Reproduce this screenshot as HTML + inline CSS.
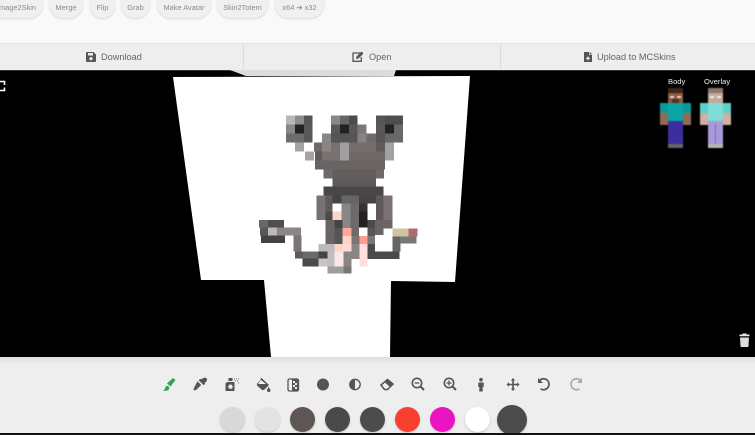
<!DOCTYPE html>
<html><head><meta charset="utf-8">
<style>
html,body{margin:0;padding:0;width:755px;height:435px;overflow:hidden;background:#eee;font-family:"Liberation Sans",sans-serif}
.abs{position:absolute}
#top{left:0;top:0;width:755px;height:43px;background:#f9f9f9}
.chip{position:absolute;top:-10px;height:28px;border-radius:14px;background:#f0f0f0;box-shadow:0 1px 2px rgba(0,0,0,.14);color:#8a8a8a;font-size:7.4px;line-height:36px;text-align:center;white-space:nowrap;overflow:hidden}
#bar{left:0;top:43px;width:755px;height:27px;background:#eeeeee;border-top:1px solid #e2e2e2;box-sizing:border-box}
.bt{position:absolute;top:44px;height:27px;line-height:27px;color:#666;font-size:9.2px;white-space:nowrap}
.sep{position:absolute;top:43px;width:1px;height:26px;background:#dcdcdc}
#view{left:0;top:70px;width:755px;height:287px;background:#000;border-top:1px solid #333;box-sizing:border-box}
#tools{left:0;top:357px;width:755px;height:76px;background:linear-gradient(#dedede,#eee 7px,#eee)}
#line{left:0;top:433px;width:755px;height:2px;background:#111}
.dot{position:absolute;border-radius:50%;width:25px;height:25px;top:407px;box-shadow:0 1px 2px rgba(0,0,0,.18)}
.lb{position:absolute;color:#eee;font-size:7.6px;top:77px;white-space:nowrap}
svg{position:absolute;overflow:visible}
.px{shape-rendering:crispEdges;filter:blur(.45px)}
</style></head><body>
<div class="abs" id="top"></div>
<div class="chip" style="left:-12px;width:55px;text-align:right"><span style="margin-right:7px">mage2Skin</span></div>
<div class="chip" style="left:49px;width:34px">Merge</div>
<div class="chip" style="left:90px;width:25px">Flip</div>
<div class="chip" style="left:121px;width:29px">Grab</div>
<div class="chip" style="left:157px;width:54px">Make Avatar</div>
<div class="chip" style="left:217px;width:51px">Skin2Totem</div>
<div class="chip" style="left:275px;width:49px">x64 ➔ x32</div>

<div class="abs" id="bar"></div>
<div class="sep" style="left:243px"></div><div class="sep" style="left:500px"></div>
<svg style="left:86px;top:52px" width="10" height="10" viewBox="0 0 10 10"><path fill="#555" d="M0 1a1 1 0 0 1 1-1h6.500L10 2.500V9a1 1 0 0 1-1 1H1a1 1 0 0 1-1-1zM2 1v2.500h5V1zM5 5a1.700 1.700 0 1 0 .01 0z" fill-rule="evenodd"/></svg>
<div class="bt" style="left:101px">Download</div>
<svg style="left:352px;top:51px" width="12" height="11" viewBox="0 0 12 11"><path fill="none" stroke="#555" stroke-width="1.300" d="M8.500 2H1v8.300h8.300V6"/><path fill="#555" d="M4 8l.5-2.500L9.500.5l2 2-5 5z"/></svg>
<div class="bt" style="left:369px">Open</div>
<svg style="left:584px;top:52px" width="8" height="10" viewBox="0 0 8 10"><path fill="#555" fill-rule="evenodd" d="M0 0h5v2.700h3V10H0zM5.700 0L8 2.100H5.700zM3.400 4.500v1.300H2.100V7h1.300v1.300h1.200V7h1.300V5.800H4.600V4.500z"/></svg>
<div class="bt" style="left:597px">Upload to MCSkins</div>

<div class="abs" id="view"></div>
<svg style="left:0;top:0" width="755" height="435" viewBox="0 0 755 435">
<polygon points="230,70 396,70 394,76 246,76" fill="#dcdcdc"/>
<polygon points="173,77 470,76 455,282 391,281 390,357 271,357 264,280 201,280" fill="#fff"/>
<path d="M0 81.500h4.500v3.500M0 90.500h4.500v-3" fill="none" stroke="#fff" stroke-width="1.600"/>
<g class="px" transform="translate(250,105) scale(.33333)">
<rect x="108" y="32" width="27" height="27" fill="#b8b6b6"/><rect x="135" y="32" width="27" height="27" fill="#8e8b8b"/><rect x="162" y="32" width="26" height="27" fill="#555"/>
<rect x="108" y="59" width="27" height="27" fill="#8a8888"/><rect x="135" y="59" width="27" height="27" fill="#222"/><rect x="162" y="59" width="26" height="27" fill="#5a5757"/>
<rect x="108" y="86" width="54" height="26" fill="#6f6c6c"/><rect x="162" y="86" width="26" height="26" fill="#5a5757"/>
<rect x="135" y="112" width="27" height="27" fill="#a5a3a3"/><rect x="165" y="139" width="27" height="27" fill="#a5a3a3"/>
<rect x="243" y="32" width="27" height="27" fill="#8a8787"/><rect x="270" y="32" width="27" height="27" fill="#666"/><rect x="297" y="32" width="26" height="27" fill="#4d4b4b"/>
<rect x="243" y="59" width="27" height="27" fill="#5a5757"/><rect x="270" y="59" width="27" height="27" fill="#222"/><rect x="297" y="59" width="26" height="27" fill="#5a5757"/><rect x="323" y="59" width="27" height="27" fill="#7d7878"/>
<rect x="243" y="86" width="80" height="27" fill="#555"/><rect x="323" y="86" width="27" height="27" fill="#8a8282"/><rect x="350" y="86" width="28" height="27" fill="#6f6868"/>
<rect x="378" y="32" width="27" height="27" fill="#555"/><rect x="405" y="32" width="54" height="27" fill="#4f4d4d"/>
<rect x="378" y="59" width="27" height="27" fill="#5a5757"/><rect x="405" y="59" width="27" height="27" fill="#222"/><rect x="432" y="59" width="27" height="27" fill="#6b6868"/>
<rect x="378" y="86" width="27" height="27" fill="#555"/><rect x="405" y="86" width="54" height="27" fill="#6a6767"/>
<rect x="405" y="113" width="27" height="54" fill="#a3a1a1"/>
<rect x="216" y="86" width="27" height="27" fill="#8a8686"/>
<rect x="192" y="113" width="24" height="27" fill="#6f6868"/><rect x="216" y="113" width="27" height="27" fill="#8a8686"/><rect x="243" y="113" width="27" height="27" fill="#7a7070"/><rect x="270" y="113" width="27" height="54" fill="#a09e9e"/><rect x="297" y="113" width="81" height="27" fill="#756d6d"/><rect x="378" y="113" width="27" height="27" fill="#5f5b5b"/>
<rect x="195" y="140" width="21" height="27" fill="#605a5a"/><rect x="216" y="140" width="54" height="27" fill="#7a7070"/><rect x="297" y="140" width="81" height="27" fill="#6f6868"/><rect x="378" y="140" width="27" height="27" fill="#706868"/>
<rect x="195" y="167" width="210" height="27" fill="#6a6363"/>
<rect x="221" y="194" width="27" height="27" fill="#6f6868"/><rect x="248" y="194" width="130" height="27" fill="#625c5c"/><rect x="378" y="194" width="24" height="27" fill="#6f6868"/>
<rect x="248" y="221" width="130" height="24" fill="#5f5a5a"/>
<rect x="221" y="245" width="180" height="27" fill="#474747"/>
<rect x="248" y="272" width="130" height="24" fill="#444"/>
<rect x="200" y="272" width="27" height="73" fill="#7a7272"/><rect x="227" y="272" width="21" height="48" fill="#5f5959"/><rect x="227" y="320" width="21" height="25" fill="#4a4a4a"/>
<rect x="378" y="272" width="22" height="73" fill="#5f5959"/><rect x="400" y="272" width="27" height="73" fill="#7a7272"/>
<rect x="275" y="272" width="27" height="24" fill="#666"/><rect x="302" y="272" width="25" height="24" fill="#6a6363"/>
<rect x="248" y="296" width="27" height="24" fill="#fff"/><rect x="275" y="296" width="27" height="97" fill="#8a8686"/><rect x="302" y="296" width="25" height="97" fill="#6f6a6a"/><rect x="327" y="296" width="25" height="24" fill="#333"/>
<rect x="248" y="320" width="27" height="25" fill="#fcd5cc"/><rect x="275" y="320" width="2" height="25" fill="#8a8686"/><rect x="327" y="320" width="25" height="47" fill="#222"/>
<rect x="227" y="345" width="27" height="72" fill="#6a6464"/><rect x="254" y="345" width="23" height="24" fill="#444"/><rect x="254" y="369" width="23" height="48" fill="#555"/>
<rect x="277" y="369" width="27" height="24" fill="#ffa79d"/>
<rect x="352" y="345" width="23" height="24" fill="#4a4a4a"/><rect x="375" y="345" width="25" height="45" fill="#6a6464"/><rect x="400" y="345" width="27" height="25" fill="#6a6464"/>
<rect x="352" y="369" width="23" height="24" fill="#5a5555"/>
<rect x="277" y="393" width="27" height="24" fill="#ffd2cc"/><rect x="304" y="393" width="24" height="24" fill="#7d7474"/><rect x="328" y="393" width="25" height="24" fill="#ff9d92"/><rect x="353" y="393" width="22" height="24" fill="#777"/>
<rect x="205" y="417" width="48" height="23" fill="#bbb"/><rect x="253" y="417" width="24" height="23" fill="#fcd5c5"/><rect x="277" y="417" width="27" height="23" fill="#ffdad6"/><rect x="304" y="417" width="24" height="23" fill="#8a8686"/><rect x="328" y="417" width="25" height="67" fill="#ffdfe0"/>
<rect x="353" y="417" width="22" height="45" fill="#4a4a4a"/>
<rect x="205" y="440" width="27" height="20" fill="#444"/><rect x="232" y="440" width="22" height="44" fill="#c0bebe"/><rect x="254" y="440" width="27" height="20" fill="#fbe7e7"/><rect x="281" y="440" width="47" height="22" fill="#8a8686"/>
<rect x="205" y="460" width="27" height="24" fill="#c6c4c4"/><rect x="254" y="460" width="27" height="24" fill="#ffe6e6"/><rect x="281" y="462" width="23" height="22" fill="#8a8686"/>
<rect x="232" y="484" width="48" height="22" fill="#9e9c9c"/><rect x="280" y="484" width="24" height="22" fill="#777"/>
<rect x="27" y="345" width="27" height="22" fill="#6a6666"/><rect x="54" y="345" width="48" height="22" fill="#4f4d4d"/>
<rect x="30" y="367" width="24" height="25" fill="#5a5757"/><rect x="54" y="367" width="27" height="25" fill="#bdb9b9"/><rect x="81" y="367" width="72" height="25" fill="#8a8686"/>
<rect x="33" y="392" width="72" height="22" fill="#444"/><rect x="130" y="392" width="24" height="48" fill="#7a7474"/>
<rect x="135" y="440" width="24" height="20" fill="#5f5b5b"/><rect x="159" y="440" width="46" height="20" fill="#6f6868"/><rect x="157" y="460" width="48" height="24" fill="#4a4a4a"/>
<rect x="427" y="370" width="48" height="24" fill="#d0c4a0"/><rect x="475" y="370" width="27" height="24" fill="#b26a72"/>
<rect x="450" y="394" width="50" height="22" fill="#7a7676"/><rect x="427" y="394" width="23" height="22" fill="#6a6464"/><rect x="427" y="416" width="24" height="24" fill="#6a6464"/>
<rect x="375" y="440" width="74" height="22" fill="#4a4a4a"/>
</g>

<!-- Steve body -->
<g class="px" transform="translate(660,88)">
<rect x="8" y="0" width="15" height="15" fill="#3a2818"/><rect x="8" y="5" width="15" height="10" fill="#8a5a40"/><rect x="10" y="8" width="4" height="2" fill="#e8d8e0"/><rect x="17" y="8" width="4" height="2" fill="#e8d8e0"/><rect x="12" y="11" width="7" height="4" fill="#5a2c20"/>
<rect x="8" y="15" width="15" height="21" fill="#0aa5a5"/><rect x="0" y="15" width="8" height="10" fill="#0a9a9a"/><rect x="23" y="15" width="8" height="10" fill="#0a9a9a"/>
<rect x="0" y="25" width="8" height="12" fill="#946a55"/><rect x="23" y="25" width="8" height="12" fill="#946a55"/>
<rect x="8" y="33" width="15" height="23" fill="#3a2f9c"/><rect x="8" y="56" width="15" height="4" fill="#666"/>
</g>
<!-- Steve overlay -->
<g class="px" transform="translate(700,88)">
<rect x="8" y="0" width="15" height="15" fill="#86796f"/><rect x="8" y="5" width="15" height="10" fill="#c4a898"/><rect x="10" y="8" width="4" height="2" fill="#eee"/><rect x="17" y="8" width="4" height="2" fill="#eee"/>
<rect x="8" y="15" width="15" height="21" fill="#7fdcd6"/><rect x="0" y="15" width="8" height="10" fill="#5fcfcb"/><rect x="23" y="15" width="8" height="10" fill="#5fcfcb"/>
<rect x="0" y="25" width="8" height="12" fill="#d0b0a0"/><rect x="23" y="25" width="8" height="12" fill="#d0b0a0"/>
<rect x="8" y="33" width="15" height="23" fill="#a89ad8"/><rect x="15" y="36" width="1" height="20" fill="#7a70b0"/><rect x="8" y="56" width="15" height="4" fill="#b5b5b5"/>
</g>
<!-- trash -->
<path d="M742.500 333.500h4v1h3v1.700h-10v-1.700h3z" fill="#e8e8e8"/><path d="M740 337.500h9l-.6 9.500h-7.800z" fill="#ddd"/>
</svg>
<div class="lb" style="left:668px">Body</div>
<div class="lb" style="left:704px">Overlay</div>

<div class="abs" id="tools"></div>
<svg style="left:0;top:0" width="755" height="435" viewBox="0 0 755 435">
<!-- brush -->
<path d="M173 378l2.500 2-5 6.500-3.500-3z" fill="#2ea45a"/><path d="M163 390.500c1.500-.2 2-2 2.500-3.500.6-1.200 2-1.500 3.300-.3.900 1.500.4 3-1.300 3.800-1.500.5-3 .5-4.500 0z" fill="#2ea45a"/>
<!-- pipette -->
<path d="M203.500 378c1.500-.8 3-.2 3.500 1.200.3 1.200-.3 2-1.200 2.800l-1.300 1 .7.700-1.500 1.500-5-5 1.500-1.500.8.700zM197.500 381.300l3.700 3.700-4.500 4.500-2.300 1-1-1 1-2.500z" fill="#555"/>
<!-- spray -->
<path fill="#555" fill-rule="evenodd" d="M228.500 378h4v3h-4zM227 382h7.500v9H225.500v-7.500zM230.500 384.500a2.200 2.200 0 1 0 .01 0z"/><path d="M234 379h1M236 379h1M238 379h1M235 381h1M237 381h1M238 383h1" stroke="#777" stroke-width="1"/>
<!-- bucket -->
<path fill="#555" fill-rule="evenodd" d="M261 377.500l8 7.500-4.500 4.500c-1 .8-2 .8-3 0l-4-3.500c-.8-1-.8-2 0-3l3-3zM261 380l-3 3.500 1 .5h7z"/><path d="M268.500 387c1 1.500 2 2.500 2 3.300a1.700 1.700 0 0 1-3.500 0c0-.8.700-1.800 1.500-3.300z" fill="#555"/>
<!-- texture -->
<rect x="288" y="379" width="10.500" height="12" rx="1.500" fill="#eee" stroke="#555" stroke-width="1.300"/><path d="M292 379h6.500v12H292z" fill="#555"/><path d="M293 381h2v2h-2zM295 383h2v2h-2zM293 385h2v2h-2zM295 387h2v2h-2z" fill="#eee"/>
<!-- circle -->
<circle cx="323" cy="384.500" r="6" fill="#555"/>
<!-- half circle -->
<circle cx="355" cy="384.500" r="5.200" fill="#eee" stroke="#555" stroke-width="1.400"/><path d="M355 379.500a5 5 0 0 0 0 10z" fill="#555"/>
<!-- eraser -->
<path d="M381 385l6.500-5.500 5.500 4.500-5.500 5.500h-3z" fill="#eee" stroke="#555" stroke-width="1.500"/><path d="M387.500 379l5.500 5-3 3-5.500-5z" fill="#555"/>
<!-- zoom out -->
<circle cx="417" cy="383" r="4.700" fill="none" stroke="#555" stroke-width="1.600"/><path d="M420.500 386.500l3.500 3.500" stroke="#555" stroke-width="2"/><path d="M414.700 383h4.600" stroke="#555" stroke-width="1.300"/>
<!-- zoom in -->
<circle cx="449" cy="383" r="4.700" fill="none" stroke="#555" stroke-width="1.600"/><path d="M452.500 386.500l3.500 3.500" stroke="#555" stroke-width="2"/><path d="M446.500 383h5M449 380.500v5" stroke="#555" stroke-width="1.300"/>
<!-- person -->
<circle cx="481" cy="379.700" r="1.800" fill="#555"/><path d="M478.300 382.500h5.400v4.500h-1v4.500h-3.400V387h-1z" fill="#555"/>
<!-- move -->
<path d="M513 378l2.200 2.500h-1.400v3.200h3.200v-1.400l2.500 2.200-2.500 2.200v-1.400h-3.200v3.200h1.400L513 391l-2.200-2.500h1.400v-3.200H509v1.400l-2.500-2.200 2.500-2.200v1.400h3.200v-3.200h-1.400z" fill="#555"/>
<!-- undo -->
<path d="M539.500 380.500a5.500 5.500 0 1 1 1 8.300" fill="none" stroke="#555" stroke-width="1.700"/><path d="M538 378v5h5z" fill="#555"/>
<!-- redo -->
<path d="M580.500 380.500a5.500 5.500 0 1 0-1 8.300" fill="none" stroke="#aaa" stroke-width="1.700"/><path d="M582 378v5h-5z" fill="#aaa"/>
</svg>
<div class="dot" style="left:220px;background:#d8d8d8"></div>
<div class="dot" style="left:255px;background:#e3e3e3"></div>
<div class="dot" style="left:290px;background:#5e5555"></div>
<div class="dot" style="left:325px;background:#4a4a4a"></div>
<div class="dot" style="left:360px;background:#4c4c4c"></div>
<div class="dot" style="left:395px;background:#f93f30"></div>
<div class="dot" style="left:430px;background:#ea14c0"></div>
<div class="dot" style="left:465px;background:#ffffff"></div>
<div class="dot" style="left:497px;top:405px;width:30px;height:30px;background:#4c4c4c"></div>
<div class="abs" id="line"></div>
</body></html>
